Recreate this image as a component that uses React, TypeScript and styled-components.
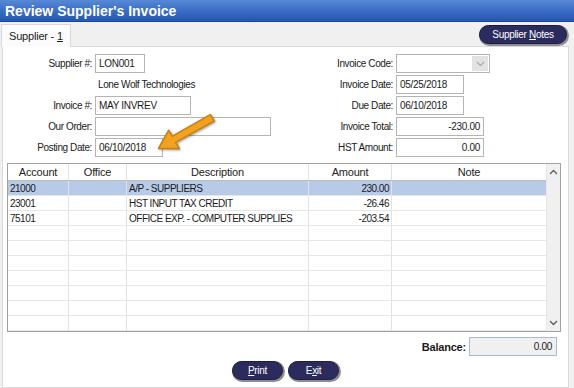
import React from "react"
import styled, { createGlobalStyle } from "styled-components"

const GlobalStyle = createGlobalStyle`
  html, body { margin: 0; padding: 0; background: #f0f0f0; }
  body { font-family: "Liberation Sans", Arial, sans-serif; }
`

type Line = { account: string, office: string, description: string, amount: string, note: string }

const lines: Line[] = [
  { account: "21000", office: "", description: "A/P - SUPPLIERS", amount: "230.00", note: "" },
  { account: "23001", office: "", description: "HST INPUT TAX CREDIT", amount: "-26.46", note: "" },
  { account: "75101", office: "", description: "OFFICE EXP. - COMPUTER SUPPLIES", amount: "-203.54", note: "" },
]

const TOTAL_ROWS = 10

export default function App() {
  const rows: (Line | null)[] = [...lines]
  while (rows.length < TOTAL_ROWS) rows.push(null)

  return (
    <Window>
      <GlobalStyle/>
      <TitleBar>Review Supplier's Invoice</TitleBar>
      <TabStrip>
        <Tab><span>Supplier - <u>1</u></span></Tab>
        <PillButton $width={88}>Supplier <u>N</u>otes</PillButton>
      </TabStrip>
      <Panel>
        <Form>
          <Column $width={297}>
            <FieldRow>
              <Label $width={89}>Supplier #:</Label>
              <TextBox $width={50}>LON001</TextBox>
            </FieldRow>
            <FieldRow>
              <Label $width={89}/>
              <StaticText>Lone Wolf Technologies</StaticText>
            </FieldRow>
            <FieldRow>
              <Label $width={89}>Invoice #:</Label>
              <TextBox $width={96}>MAY INVREV</TextBox>
            </FieldRow>
            <FieldRow>
              <Label $width={89}>Our Order:</Label>
              <TextBox $width={176}/>
            </FieldRow>
            <FieldRow>
              <Label $width={89}>Posting Date:</Label>
              <TextBox $width={68}>06/10/2018</TextBox>
            </FieldRow>
          </Column>
          <Column $width={200}>
            <FieldRow>
              <Label $width={93}>Invoice Code:</Label>
              <SelectBox>
                <SelectArrow>
                  <svg width="9" height="6" viewBox="0 0 9 6">
                    <path d="M1 1l3.5 3.5L8 1" fill="none" stroke="#a8a8a8" strokeWidth="1.2"/>
                  </svg>
                </SelectArrow>
              </SelectBox>
            </FieldRow>
            <FieldRow>
              <Label $width={93}>Invoice Date:</Label>
              <TextBox $width={68}>05/25/2018</TextBox>
            </FieldRow>
            <FieldRow>
              <Label $width={93}>Due Date:</Label>
              <TextBox $width={68}>06/10/2018</TextBox>
            </FieldRow>
            <FieldRow>
              <Label $width={93}>Invoice Total:</Label>
              <TextBox $width={88} $right>-230.00</TextBox>
            </FieldRow>
            <FieldRow>
              <Label $width={93}>HST Amount:</Label>
              <TextBox $width={88} $right>0.00</TextBox>
            </FieldRow>
          </Column>
        </Form>

        <Grid>
          <GridBody>
            <HeaderRow>
              <HeadCell>Account</HeadCell>
              <HeadCell>Office</HeadCell>
              <HeadCell>Description</HeadCell>
              <HeadCell>Amount</HeadCell>
              <HeadCell>Note</HeadCell>
            </HeaderRow>
            {rows.map((r, i) => (
              <DataRow key={i} $selected={i === 0}>
                <Cell>{r?.account}</Cell>
                <Cell>{r?.office}</Cell>
                <Cell>{r?.description}</Cell>
                <Cell $right>{r?.amount}</Cell>
                <Cell>{r?.note}</Cell>
              </DataRow>
            ))}
          </GridBody>
          <ScrollBar>
            <svg width="9" height="6" viewBox="0 0 9 6">
              <path d="M1 5l3.5-3.5L8 5" fill="none" stroke="#606060" strokeWidth="1.4"/>
            </svg>
            <svg width="9" height="6" viewBox="0 0 9 6">
              <path d="M1 1l3.5 3.5L8 1" fill="none" stroke="#606060" strokeWidth="1.4"/>
            </svg>
          </ScrollBar>
        </Grid>

        <BalanceRow>
          <BalanceLabel>Balance:</BalanceLabel>
          <BalanceBox>0.00</BalanceBox>
        </BalanceRow>

        <ButtonRow>
          <PillButton $width={51}><u>P</u>rint</PillButton>
          <PillButton $width={51}>E<u>x</u>it</PillButton>
        </ButtonRow>
      </Panel>

      <Callout width="78" height="50" viewBox="149 107 78 50">
        <polygon
          points="210.3,114.6 172.4,136.3 168.6,130.3 158.5,148.5 179.2,148.6 175.6,142.4 214.2,121"
          fill="#f3a21f"
          stroke="#c98214"
          strokeWidth="1.6"
          strokeLinejoin="round"
        />
      </Callout>
    </Window>
  )
}

const Window = styled.div`
  position: relative;
  width: 574px;
  height: 388px;
  overflow: hidden;
  background: #f0f0f0;
  display: flex;
  flex-direction: column;
  font-family: "Liberation Sans", Arial, sans-serif;
  color: #1a1a1a;
`

const TitleBar = styled.div`
  height: 22px;
  flex-shrink: 0;
  padding-left: 5px;
  line-height: 22px;
  font-size: 14px;
  font-weight: bold;
  color: white;
  background: linear-gradient(to bottom, #5889d6 0%, #3d70c8 45%, #2456b0 100%);
  border-bottom: 1px solid #1c4696;
  box-sizing: border-box;
`

const TabStrip = styled.div`
  height: 24px;
  flex-shrink: 0;
  display: flex;
  align-items: center;
  justify-content: space-between;
  padding: 0 7px 0 1px;
  position: relative;
  z-index: 1;
`

const Tab = styled.div`
  align-self: flex-end;
  height: 22px;
  margin-bottom: -1px;
  padding: 0 7px;
  display: flex;
  align-items: center;
  font-size: 11px;
  letter-spacing: -0.2px;
  white-space: pre;
  background: #fbfbfb;
  border: 1px solid #d9d9d9;
  border-bottom: none;
`

const PillButton = styled.button<{ $width: number }>`
  width: ${({ $width }) => $width}px;
  height: 19px;
  padding: 0;
  border: 1px solid #1c1c46;
  border-radius: 10px;
  background: #2b2b5e;
  color: white;
  font-family: "Liberation Sans", Arial, sans-serif;
  font-size: 10px;
  letter-spacing: -0.3px;
  box-shadow: 1px 1px 0 1px #8d8d8d;
  cursor: pointer;
`

const Panel = styled.div`
  flex: 1;
  margin: 0 5px 0 2px;
  background: white;
  border: 1px solid #d9d9d9;
  display: flex;
  flex-direction: column;
`

const Form = styled.div`
  display: flex;
  padding-top: 6px;
`

const Column = styled.div<{ $width: number }>`
  width: ${({ $width }) => $width}px;
  display: flex;
  flex-direction: column;
`

const FieldRow = styled.div`
  height: 21px;
  display: flex;
  align-items: center;
`

const Label = styled.div<{ $width: number }>`
  width: ${({ $width }) => $width}px;
  margin-right: 3px;
  text-align: right;
  font-size: 10px;
  letter-spacing: -0.4px;
  white-space: nowrap;
`

const StaticText = styled.div`
  padding-left: 3px;
  font-size: 10px;
  letter-spacing: -0.4px;
`

const TextBox = styled.div<{ $width: number, $right?: boolean }>`
  width: ${({ $width }) => $width}px;
  height: 19px;
  box-sizing: border-box;
  border: 1px solid #b4b4b4;
  background: white;
  padding: 0 3px;
  display: flex;
  align-items: center;
  justify-content: ${({ $right }) => $right ? "flex-end" : "flex-start"};
  font-size: 10px;
  letter-spacing: -0.3px;
  white-space: nowrap;
`

const SelectBox = styled.div`
  width: 94px;
  height: 19px;
  box-sizing: border-box;
  border: 1px solid #b4b4b4;
  background: white;
  display: flex;
  justify-content: flex-end;
  padding: 1px;
`

const SelectArrow = styled.div`
  width: 16px;
  background: #e2e2e2;
  display: flex;
  align-items: center;
  justify-content: center;
`

const Grid = styled.div`
  width: 554px;
  box-sizing: border-box;
  margin: 5px 0 0 4px;
  border: 1px solid #a2a2a2;
  display: flex;
`

const GridBody = styled.div`
  flex: 1;
  display: flex;
  flex-direction: column;
`

const columns = "61px 58px 182px 83px 154px"

const HeaderRow = styled.div`
  height: 17px;
  display: grid;
  grid-template-columns: ${columns};
  border-bottom: 1px solid #bcbcbc;
  box-sizing: border-box;
`

const HeadCell = styled.div`
  border-right: 1px solid #e2e2e2;
  display: flex;
  align-items: center;
  justify-content: center;
  font-size: 11px;
  letter-spacing: -0.2px;
  color: #222;
  &:last-child { border-right: none; }
`

const DataRow = styled.div<{ $selected: boolean }>`
  height: 15px;
  box-sizing: border-box;
  display: grid;
  grid-template-columns: ${columns};
  border-bottom: 1px solid #e6e6e6;
  background: ${({ $selected }) => $selected ? "#b7cbe8" : "white"};
`

const Cell = styled.div<{ $right?: boolean }>`
  border-right: 1px solid #e2e2e2;
  padding: 0 2px;
  display: flex;
  align-items: center;
  justify-content: ${({ $right }) => $right ? "flex-end" : "flex-start"};
  font-size: 10px;
  letter-spacing: -0.5px;
  white-space: nowrap;
  overflow: hidden;
  &:last-child { border-right: none; }
`

const ScrollBar = styled.div`
  width: 14px;
  background: #f0f0f0;
  border-left: 1px solid #e6e6e6;
  display: flex;
  flex-direction: column;
  align-items: center;
  justify-content: space-between;
  padding: 5px 0 5px;
`

const BalanceRow = styled.div`
  display: flex;
  align-items: center;
  justify-content: flex-end;
  margin-top: 5px;
  padding-right: 11px;
`

const BalanceLabel = styled.div`
  font-size: 11px;
  font-weight: bold;
  letter-spacing: -0.2px;
  margin-right: 3px;
`

const BalanceBox = styled.div`
  width: 88px;
  height: 19px;
  box-sizing: border-box;
  border: 1px solid #a9b9cf;
  background: #f0f0f0;
  padding: 0 4px;
  display: flex;
  align-items: center;
  justify-content: flex-end;
  font-size: 10px;
  letter-spacing: -0.3px;
`

const ButtonRow = styled.div`
  display: flex;
  justify-content: center;
  gap: 5px;
  margin-top: 5px;
`

const Callout = styled.svg`
  position: absolute;
  left: 149px;
  top: 107px;
  overflow: visible;
  filter: drop-shadow(1px 1px 1px rgba(0, 0, 0, 0.35));
`
